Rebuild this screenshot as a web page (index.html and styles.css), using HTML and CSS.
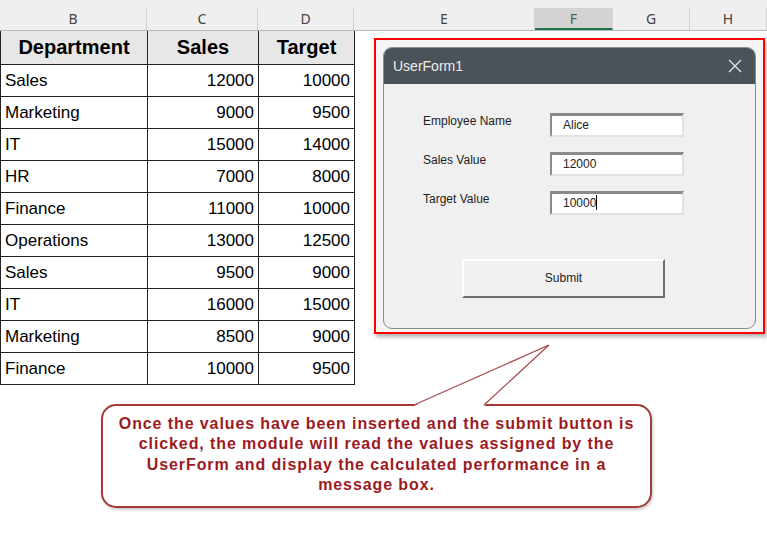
FILE: index.html
```html
<!DOCTYPE html>
<html lang="en">
<head>
    <meta charset="UTF-8">
    <title>UserForm performance</title>
    <link rel="stylesheet" href="styles.css">
</head>
<body>
    <div class="colbar">
        <div class="colhead">B</div>
        <div class="colhead">C</div>
        <div class="colhead">D</div>
        <div class="colhead">E</div>
        <div class="colhead selected">F</div>
        <div class="colhead">G</div>
        <div class="colhead">H</div>
    </div>

    <div class="sheet">
        <table class="data">
            <colgroup>
                <col class="col-b">
                <col class="col-c">
                <col class="col-d">
            </colgroup>
            <tr><th>Department</th><th>Sales</th><th>Target</th></tr>
            <tr><td>Sales</td><td class="num">12000</td><td class="num">10000</td></tr>
            <tr><td>Marketing</td><td class="num">9000</td><td class="num">9500</td></tr>
            <tr><td>IT</td><td class="num">15000</td><td class="num">14000</td></tr>
            <tr><td>HR</td><td class="num">7000</td><td class="num">8000</td></tr>
            <tr><td>Finance</td><td class="num">11000</td><td class="num">10000</td></tr>
            <tr><td>Operations</td><td class="num">13000</td><td class="num">12500</td></tr>
            <tr><td>Sales</td><td class="num">9500</td><td class="num">9000</td></tr>
            <tr><td>IT</td><td class="num">16000</td><td class="num">15000</td></tr>
            <tr><td>Marketing</td><td class="num">8500</td><td class="num">9000</td></tr>
            <tr><td>Finance</td><td class="num">10000</td><td class="num">9500</td></tr>
        </table>

        <div class="frame">
            <div class="window">
                <div class="titlebar">
                    <span class="title">UserForm1</span>
                    <svg class="close" width="14" height="14" viewBox="0 0 14 14">
                        <path d="M1 1 L13 13 M13 1 L1 13" stroke="#e6e6e6" stroke-width="1.3" fill="none"/>
                    </svg>
                </div>
                <div class="formbody">
                    <div class="fields">
                        <div class="label">Employee Name</div>
                        <div class="textbox">Alice</div>
                        <div class="label">Sales Value</div>
                        <div class="textbox">12000</div>
                        <div class="label">Target Value</div>
                        <div class="textbox">10000<span class="caret"></span></div>
                    </div>
                    <div class="button">Submit</div>
                </div>
            </div>
        </div>
    </div>

    <div class="callout">
        <svg class="pointer" width="160" height="66" viewBox="0 0 160 66">
            <polygon points="13,62 148,1 83,62" fill="#fff"/>
            <polyline points="13,61 148,1 83,61" fill="none" stroke="#a8484b" stroke-width="1.2"/>
        </svg>
        <p>Once the values have been inserted and the submit button is<br>
        clicked, the module will read the values assigned by the<br>
        UserForm and display the calculated performance in a<br>
        message box.</p>
    </div>
</body>
</html>
```

FILE: styles.css
```css
body {
    margin: 0;
    background-color: #fff;
    font-family: "Liberation Sans", Arial, sans-serif;
    width: 767px;
    height: 552px;
    overflow: hidden;
}

/* excel column letters */
.colbar {
    display: grid;
    grid-template-columns: 147px 111px 96px 181px 78px 77px 77px;
    padding-top: 8px;
    background-color: #efefef;
    border-bottom: 1px solid #b9b9b9;
}
.colhead {
    height: 22px;
    line-height: 22px;
    text-align: center;
    font-family: "Noto Sans", "Open Sans", sans-serif;
    font-size: 14px;
    color: #444;
    border-right: 1px solid #d2d2d2;
    box-sizing: border-box;
}
.colhead.selected {
    background-color: #d3d3d3;
    color: #3d6b4c;
    border-bottom: 2px solid #217346;
    line-height: 21px;
}

.sheet {
    display: flex;
    align-items: flex-start;
}

/* data table */
.data {
    border-collapse: collapse;
    font-size: 17px;
    color: #000;
}
.col-b { width: 147px; }
.col-c { width: 111px; }
.col-d { width: 96px; }
.data th {
    background-color: #e7e7e7;
    font-size: 20px;
    font-weight: bold;
    height: 33px;
    padding: 0;
    border: 1px solid #222;
    border-top: 0;
}
.data td {
    height: 32px;
    padding: 0 4px;
    border: 1px solid #222;
    box-sizing: border-box;
}
.data td.num {
    text-align: right;
}

/* userform screenshot */
.frame {
    margin: 7px 0 0 19px;
    width: 391px;
    height: 296px;
    box-sizing: border-box;
    border: 2px solid #f00;
    padding: 7px 7px 3px 7px;
    background-color: #f4f4f4;
    box-shadow: 2px 3px 4px rgba(0, 0, 0, 0.3);
}
.window {
    height: 100%;
    box-sizing: border-box;
    border: 1px solid #8d8d8d;
    border-radius: 9px;
    overflow: hidden;
    background-color: #f0f0f0;
    display: flex;
    flex-direction: column;
}
.titlebar {
    height: 36px;
    background-color: #4b535a;
    display: flex;
    align-items: center;
    justify-content: space-between;
    padding: 0 13px 0 9px;
}
.title {
    color: #ececec;
    font-size: 14px;
}
.formbody {
    padding: 29px 0 0 39px;
    font-size: 12px;
    color: #222;
}
.fields {
    display: grid;
    grid-template-columns: 127px 134px;
    row-gap: 15px;
}
.label {
    padding-top: 1px;
}
.textbox {
    height: 24px;
    box-sizing: border-box;
    background-color: #fff;
    border-top: 3px solid #8a8a8a;
    border-left: 2px solid #8a8a8a;
    border-right: 2px solid #e2e2e2;
    border-bottom: 2px solid #e2e2e2;
    padding-left: 11px;
    line-height: 19px;
}
.caret {
    display: inline-block;
    width: 1px;
    height: 15px;
    background-color: #000;
    vertical-align: -3px;
}
.button {
    margin: 44px 0 0 39px;
    width: 203px;
    height: 39px;
    box-sizing: border-box;
    border-top: 2px solid #fff;
    border-left: 2px solid #fff;
    border-right: 2px solid #6e6e6e;
    border-bottom: 2px solid #6e6e6e;
    background-color: #f0f0f0;
    text-align: center;
    line-height: 35px;
}

/* note */
.callout {
    position: relative;
    margin: 19px 0 0 101px;
    width: 551px;
    height: 104px;
    box-sizing: border-box;
    border: 2px solid #a3383b;
    border-radius: 15px;
    box-shadow: 1px 2px 3px rgba(0, 0, 0, 0.2);
}
.callout p {
    margin: 0;
    padding-top: 8px;
    text-align: center;
    font-size: 16px;
    font-weight: bold;
    letter-spacing: 0.9px;
    line-height: 20.3px;
    color: #9c1a1e;
}
.pointer {
    position: absolute;
    left: 298px;
    top: -62px;
}
```
